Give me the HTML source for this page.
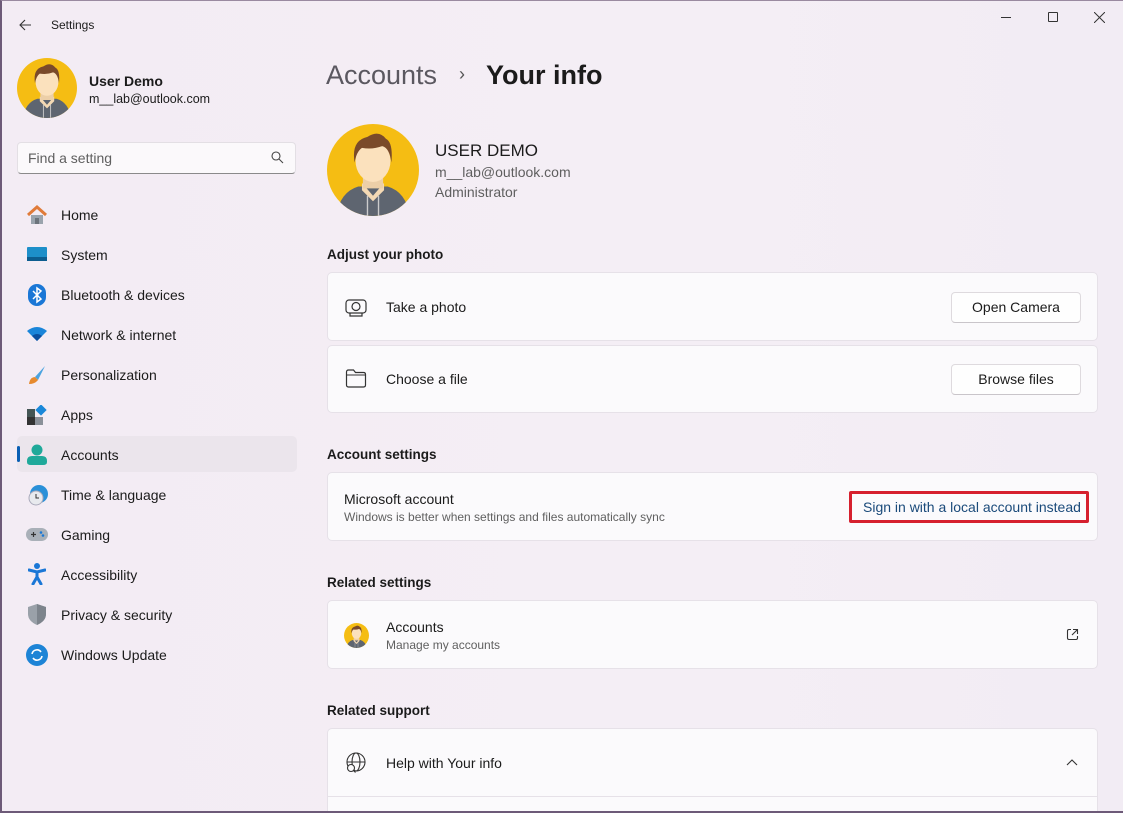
<!DOCTYPE html>
<html><head><meta charset="utf-8">
<style>
*{box-sizing:border-box;margin:0;padding:0}
html,body{width:1123px;height:813px;overflow:hidden}
body{font-family:"Liberation Sans",sans-serif;color:#1b1b1b;background:#f3edf4;position:relative}
.frame{position:absolute;inset:0;border-left:2px solid #6d5a78;border-top:1px solid #9a8aa0;background:linear-gradient(90deg,#f3ecf4,#f4eef5 60%,#f2ecf4)}
.a{position:absolute;white-space:nowrap}
.card{position:absolute;left:327px;width:771px;background:#fbfafc;border:1px solid #e6e1e8;border-radius:5px}
.btn{position:absolute;left:951px;width:130px;height:31px;background:#fefefe;border:1px solid #dedade;border-bottom-color:#c9c5ca;border-radius:4px;font-size:14px;text-align:center;line-height:29px}
.nav{position:absolute;left:61px;font-size:14px}
.h{position:absolute;left:327px;font-size:13.5px;font-weight:bold}
.t{font-size:14px}
.s{font-size:12px;color:#606060}
</style></head><body>
<svg width="0" height="0" style="position:absolute">
<defs>
<symbol id="av" viewBox="0 0 100 100">
<clipPath id="c"><circle cx="50" cy="50" r="50"/></clipPath>
<g clip-path="url(#c)">
<rect width="100" height="100" fill="#f5bd13"/>
<path d="M10 100 Q14 74 34 68 L66 68 Q86 74 90 100Z" fill="#5e6570"/>
<path d="M38 64 L50 78 L62 64 L62 72 L50 84 L38 72Z" fill="#f4d9b4"/>
<rect x="39" y="54" width="22" height="16" fill="#eccfa8"/>
<ellipse cx="50" cy="40" rx="19" ry="23" fill="#fbe1bd"/>
<path d="M30 42 Q26 18 44 14 Q56 6 64 16 Q72 20 70 42 Q68 26 60 24 Q50 28 38 26 Q32 30 30 42Z" fill="#7a4a2a"/>
<path d="M44 78 L44 100 M56 78 L56 100" stroke="#ccc" stroke-width="1.5"/>
</g>
</symbol>
</defs></svg>
<div class="frame"></div>

<svg class="a" style="left:18px;top:18px" width="14" height="14" viewBox="0 0 14 14"><path d="M13 7H2M7 2L2 7l5 5" stroke="#333" stroke-width="1.1" fill="none"/></svg>
<div class="a" style="left:51px;top:18px;font-size:12px">Settings</div>
<div class="a" style="left:1001px;top:17px;width:10px;border-top:1px solid #333"></div>
<div class="a" style="left:1048px;top:12px;width:10px;height:10px;border:1px solid #333;border-radius:1px"></div>
<svg class="a" style="left:1094px;top:12px" width="11" height="11"><path d="M0 0L11 11M11 0L0 11" stroke="#333" stroke-width="1"/></svg>

<svg class="a" style="left:17px;top:58px" width="60" height="60"><use href="#av"/></svg>
<div class="a" style="left:89px;top:73px;font-size:14px;font-weight:bold">User Demo</div>
<div class="a" style="left:89px;top:92px;font-size:12.5px">m__lab@outlook.com</div>
<div class="a" style="left:17px;top:142px;width:279px;height:32px;background:#fbf9fb;border:1px solid #e3dfe4;border-bottom:1px solid #8a8a8a;border-radius:4px"></div>
<div class="a" style="left:28px;top:150px;font-size:14px;color:#5f5f5f">Find a setting</div>
<svg class="a" style="left:271px;top:151px" width="13" height="13"><circle cx="5" cy="5" r="4" stroke="#444" fill="none" stroke-width="1.1"/><path d="M8 8l4 4" stroke="#444" stroke-width="1.1"/></svg>

<div class="a" style="left:17px;top:436px;width:280px;height:36px;background:#ebe5ec;border-radius:5px"></div>
<div class="a" style="left:17px;top:446px;width:3px;height:16px;background:#0a5fb4;border-radius:2px"></div>

<svg class="a" style="left:26px;top:204px" width="22" height="22" viewBox="0 0 22 22"><path d="M2 11L11 3l9 8" stroke="#e07b39" stroke-width="3" fill="none"/><rect x="5" y="11" width="12" height="9" fill="#9aa4ad"/><rect x="9" y="14" width="4" height="6" fill="#6c747c"/></svg>
<svg class="a" style="left:27px;top:247px" width="20" height="15"><rect width="20" height="14" rx="1" fill="#1d8fc9"/><rect y="10" width="20" height="4" fill="#0c5d8f"/></svg>
<svg class="a" style="left:28px;top:284px" width="18" height="22" viewBox="0 0 18 22"><rect width="18" height="22" rx="9" fill="#1a77d6"/><path d="M5 7l8 8-4 3V4l4 3-8 8" stroke="#fff" stroke-width="1.5" fill="none"/></svg>
<svg class="a" style="left:26px;top:325px" width="22" height="18" viewBox="0 0 22 18"><path d="M11 16L1 6Q11-2 21 6Z" fill="#1a85d9"/><path d="M11 16L6 11Q11 7 16 11Z" fill="#0b4f9e"/></svg>
<svg class="a" style="left:27px;top:364px" width="20" height="22" viewBox="0 0 20 22"><path d="M18 2L8 13l3 3z" fill="#4aa3df"/><path d="M8 13q-5 0-6 7 6 0 9-4z" fill="#e68a2e"/></svg>
<svg class="a" style="left:27px;top:405px" width="20" height="20"><rect x="0" y="4" width="8" height="8" fill="#455"/><rect x="0" y="12" width="8" height="8" fill="#333"/><rect x="8" y="12" width="8" height="8" fill="#8a9099"/><rect x="10" y="1" width="8" height="8" fill="#1a88d9" transform="rotate(45 14 5)"/></svg>
<svg class="a" style="left:27px;top:444px" width="20" height="22"><circle cx="10" cy="6" r="5.5" fill="#1fa99a"/><path d="M0 17q0-5 5-5h10q5 0 5 5v1q0 3-4 3H4q-4 0-4-3z" fill="#1fa99a"/></svg>
<svg class="a" style="left:27px;top:484px" width="22" height="22"><circle cx="12" cy="10" r="9" fill="#2a90d8"/><circle cx="9" cy="14" r="7" fill="#e8eaee" stroke="#aab" stroke-width="1"/><path d="M9 10v4h3" stroke="#333" fill="none"/></svg>
<svg class="a" style="left:26px;top:527px" width="22" height="15"><rect y="1" width="22" height="13" rx="6.5" fill="#a9b0b8"/><path d="M5 7.5h5M7.5 5v5" stroke="#333" stroke-width="1.2"/><circle cx="15" cy="5.5" r="1.3" fill="#1a77d6"/><circle cx="17" cy="8.5" r="1.3" fill="#1a77d6"/></svg>
<svg class="a" style="left:28px;top:563px" width="18" height="22" viewBox="0 0 18 22"><circle cx="9" cy="3" r="3" fill="#1a77d6"/><path d="M1 7l8 2 8-2M9 9v5l-4 7M9 14l4 7" stroke="#1a77d6" stroke-width="3" fill="none" stroke-linecap="round"/></svg>
<svg class="a" style="left:28px;top:604px" width="18" height="21"><path d="M9 0L18 3v7q0 7-9 11Q0 17 0 10V3z" fill="#9aa1a9"/><path d="M9 0L18 3v7q0 7-9 11z" fill="#7d848c"/></svg>
<svg class="a" style="left:26px;top:644px" width="22" height="22"><circle cx="11" cy="11" r="11" fill="#1d84d6"/><path d="M6 10a5 5 0 0 1 9-2M16 12a5 5 0 0 1-9 2" stroke="#fff" stroke-width="1.6" fill="none"/></svg>

<div class="nav" style="top:207px">Home</div>
<div class="nav" style="top:247px">System</div>
<div class="nav" style="top:287px">Bluetooth &amp; devices</div>
<div class="nav" style="top:327px">Network &amp; internet</div>
<div class="nav" style="top:367px">Personalization</div>
<div class="nav" style="top:407px">Apps</div>
<div class="nav" style="top:447px">Accounts</div>
<div class="nav" style="top:487px">Time &amp; language</div>
<div class="nav" style="top:527px">Gaming</div>
<div class="nav" style="top:567px">Accessibility</div>
<div class="nav" style="top:607px">Privacy &amp; security</div>
<div class="nav" style="top:647px">Windows Update</div>

<div class="a" style="left:326px;top:60px;font-size:27px;color:#5b5860">Accounts</div>
<div class="a" style="left:459px;top:64px;font-size:18px;color:#555">›</div>
<div class="a" style="left:486px;top:60px;font-size:27px;font-weight:bold;color:#1b1b1b">Your info</div>

<svg class="a" style="left:327px;top:124px" width="92" height="92"><use href="#av"/></svg>
<div class="a" style="left:435px;top:141px;font-size:17px">USER DEMO</div>
<div class="a" style="left:435px;top:164px;font-size:14px;color:#5f5f5f">m__lab@outlook.com</div>
<div class="a" style="left:435px;top:184px;font-size:14px;color:#5f5f5f">Administrator</div>

<div class="h" style="top:247px">Adjust your photo</div>
<div class="card" style="top:272px;height:69px"></div>
<svg class="a" style="left:345px;top:298px" width="22" height="20" viewBox="0 0 22 20"><rect x="1" y="2" width="20" height="13" rx="3" fill="none" stroke="#333" stroke-width="1.2"/><circle cx="11" cy="8.5" r="4" fill="none" stroke="#333" stroke-width="1.2"/><path d="M5 15v3h12v-3" fill="none" stroke="#333" stroke-width="1.2"/></svg>
<div class="a t" style="left:386px;top:299px">Take a photo</div>
<div class="btn" style="top:292px">Open Camera</div>

<div class="card" style="top:345px;height:68px"></div>
<svg class="a" style="left:345px;top:369px" width="22" height="19" viewBox="0 0 22 19"><path d="M1.5 3q0-2 2-2h5l2 2.5h8q2 0 2 2V16q0 2-2 2h-15q-2 0-2-2z" fill="none" stroke="#333" stroke-width="1.2"/><path d="M1.5 6h19" stroke="#333" stroke-width="1"/></svg>
<div class="a t" style="left:386px;top:371px">Choose a file</div>
<div class="btn" style="top:364px">Browse files</div>

<div class="h" style="top:447px">Account settings</div>
<div class="card" style="top:472px;height:69px"></div>
<div class="a t" style="left:344px;top:491px">Microsoft account</div>
<div class="a s" style="left:344px;top:510px">Windows is better when settings and files automatically sync</div>
<div class="a" style="left:849px;top:491px;width:240px;height:32px;border:3px solid #d6202e;border-radius:2px;background:#fbfafc"></div>
<div class="a" style="left:863px;top:499px;font-size:14px;color:#1a4a7a">Sign in with a local account instead</div>

<div class="h" style="top:575px">Related settings</div>
<div class="card" style="top:600px;height:69px"></div>
<svg class="a" style="left:344px;top:623px" width="25" height="25"><use href="#av"/></svg>
<div class="a t" style="left:386px;top:619px">Accounts</div>
<div class="a s" style="left:386px;top:638px">Manage my accounts</div>
<svg class="a" style="left:1066px;top:628px" width="13" height="13" viewBox="0 0 13 13"><path d="M5 1.5H3Q1.5 1.5 1.5 3v7q0 1.5 1.5 1.5h7q1.5 0 1.5-1.5V8M7 1.5h4.5V6M11.5 1.5L6 7" fill="none" stroke="#333" stroke-width="1.1"/></svg>

<div class="h" style="top:703px">Related support</div>
<div class="card" style="top:728px;height:83px;border-bottom:none;border-radius:5px 5px 0 0"></div>
<div class="a" style="left:328px;top:796px;width:769px;border-top:1px solid #e6e1e8"></div>
<svg class="a" style="left:345px;top:752px" width="22" height="22" viewBox="0 0 22 22"><circle cx="11" cy="10" r="9" fill="none" stroke="#333" stroke-width="1.1"/><ellipse cx="11" cy="10" rx="4" ry="9" fill="none" stroke="#333" stroke-width="1.1"/><path d="M2 10h18" stroke="#333" stroke-width="1.1"/><circle cx="6" cy="16" r="3.5" fill="#fbfafc" stroke="#333" stroke-width="1.1"/><path d="M8.5 18.5l2 2" stroke="#333" stroke-width="1.1"/></svg>
<div class="a t" style="left:386px;top:755px">Help with Your info</div>
<svg class="a" style="left:1066px;top:758px" width="12" height="8"><path d="M1 7l5-5 5 5" fill="none" stroke="#333" stroke-width="1.1"/></svg>
<div class="a" style="left:0;top:811px;width:1123px;height:2px;background:#6d5a78"></div>
</body></html>
